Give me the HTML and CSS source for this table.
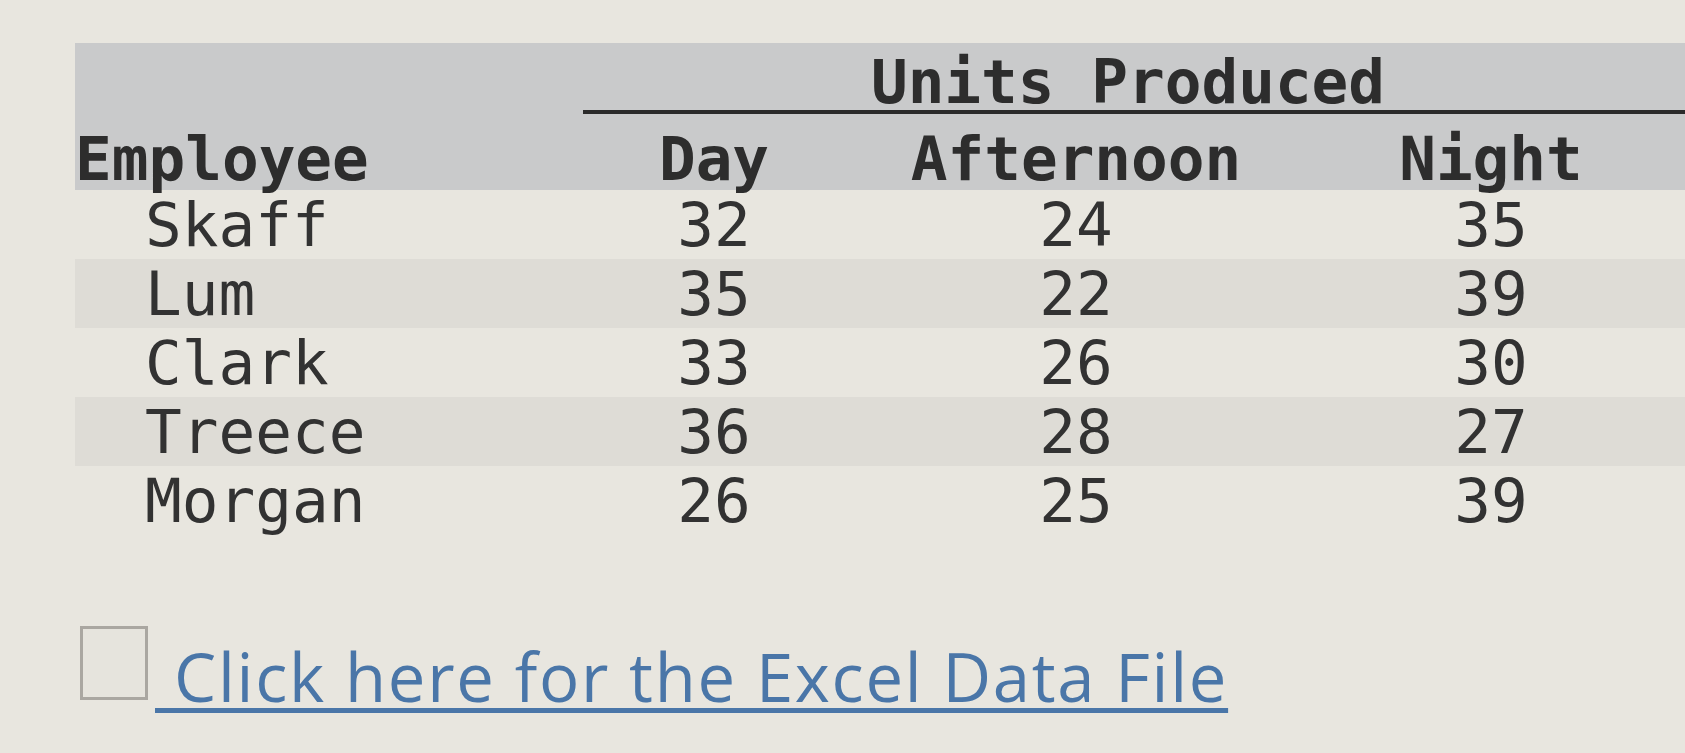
FILE: index.html
```html
<!DOCTYPE html>
<html lang="en">
<head>
<meta charset="utf-8">
<title>Units Produced</title>
<link rel="stylesheet" href="styles.css">
</head>
<body>
<div class="page">
  <div class="grid">
    <div class="hcell h1 blank"></div>
    <div class="hcell h1 span">Units Produced</div>
    <div class="hcell h2 emp">Employee</div>
    <div class="hcell h2 num">Day</div>
    <div class="hcell h2 num">Afternoon</div>
    <div class="hcell h2 num last">Night</div>

    <div class="cell name">Skaff</div><div class="cell num">32</div><div class="cell num">24</div><div class="cell num last">35</div>
    <div class="cell name alt">Lum</div><div class="cell num alt">35</div><div class="cell num alt">22</div><div class="cell num alt last">39</div>
    <div class="cell name">Clark</div><div class="cell num">33</div><div class="cell num">26</div><div class="cell num last">30</div>
    <div class="cell name alt">Treece</div><div class="cell num alt">36</div><div class="cell num alt">28</div><div class="cell num alt last">27</div>
    <div class="cell name">Morgan</div><div class="cell num">26</div><div class="cell num">25</div><div class="cell num last">39</div>
  </div>

  <div class="file">
    <span class="checkbox"></span>
    <a class="link" href="#">&nbsp;Click here for the Excel Data File</a>
  </div>
</div>
</body>
</html>
```

FILE: styles.css
```css
html, body {
  margin: 0;
  padding: 0;
  background: #e8e6df;
}

.page {
  padding-top: 43px;
  padding-left: 75px;
  height: 753px;
  box-sizing: border-box;
  overflow: hidden;
}

.grid {
  display: grid;
  grid-template-columns: 508px 262px 462px 1fr;
  font-family: "DejaVu Sans Mono", monospace;
  font-size: 61px;
  color: #323232;
}

.hcell {
  background: #c9cacb;
  font-weight: bold;
  color: #2d2d2d;
}

.h1 {
  height: 71px;
  box-sizing: border-box;
  padding-top: 10px;
  line-height: 57px;
}

.h1.span {
  grid-column: 2 / 5;
  text-align: center;
  border-bottom: 4px solid #2b2b2b;
  padding-right: 12px;
}

.h2 {
  padding-top: 14px;
  line-height: 62px;
}

.h2.num {
  text-align: center;
}

.cell {
  line-height: 69px;
  height: 69px;
}

.cell.name {
  padding-left: 70px;
}

.cell.num {
  text-align: center;
}

.last {
  padding-right: 10px;
}

.cell.alt {
  background: #dedcd6;
}

.file {
  display: flex;
  align-items: flex-start;
  margin-top: 91px;
  padding-left: 5px;
}

.checkbox {
  display: block;
  width: 62px;
  height: 68px;
  border: 3px solid #aaa7a1;
  background: #e6e4dd;
}

.link {
  display: block;
  margin-top: 5px;
  margin-left: 7px;
  font-family: "Open Sans", sans-serif;
  font-size: 67px;
  letter-spacing: 1.7px;
  line-height: 91px;
  color: #4a76a8;
  text-decoration: underline;
  text-decoration-thickness: 5px;
  text-underline-offset: 6px;
  white-space: nowrap;
}
```
